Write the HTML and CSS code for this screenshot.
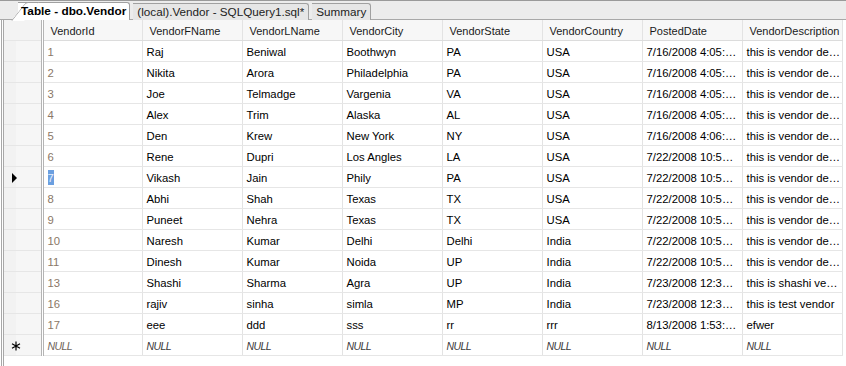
FILE: index.html
```html
<!DOCTYPE html>
<html>
<head>
<meta charset="utf-8">
<link rel="stylesheet" href="styles.css">
</head>
<body>
<div class="tabs">
  <div class="tab active">Table - dbo.Vendor</div>
  <div class="tab">(local).Vendor - SQLQuery1.sql*</div>
  <div class="tab">Summary</div>
</div>
<div class="panel">
  <table class="grid">
    <colgroup>
      <col class="c-rh"><col class="c"><col class="c"><col class="c"><col class="c"><col class="c"><col class="c"><col class="c"><col class="c">
    </colgroup>
    <thead>
      <tr><th class="rh"></th><th>VendorId</th><th>VendorFName</th><th>VendorLName</th><th>VendorCity</th><th>VendorState</th><th>VendorCountry</th><th>PostedDate</th><th>VendorDescription</th></tr>
    </thead>
    <tbody>
      <tr><td class="rh"></td><td class="id">1</td><td>Raj</td><td>Beniwal</td><td>Boothwyn</td><td>PA</td><td>USA</td><td>7/16/2008 4:05:…</td><td>this is vendor de…</td></tr>
      <tr><td class="rh"></td><td class="id">2</td><td>Nikita</td><td>Arora</td><td>Philadelphia</td><td>PA</td><td>USA</td><td>7/16/2008 4:05:…</td><td>this is vendor de…</td></tr>
      <tr><td class="rh"></td><td class="id">3</td><td>Joe</td><td>Telmadge</td><td>Vargenia</td><td>VA</td><td>USA</td><td>7/16/2008 4:05:…</td><td>this is vendor de…</td></tr>
      <tr><td class="rh"></td><td class="id">4</td><td>Alex</td><td>Trim</td><td>Alaska</td><td>AL</td><td>USA</td><td>7/16/2008 4:05:…</td><td>this is vendor de…</td></tr>
      <tr><td class="rh"></td><td class="id">5</td><td>Den</td><td>Krew</td><td>New York</td><td>NY</td><td>USA</td><td>7/16/2008 4:06:…</td><td>this is vendor de…</td></tr>
      <tr><td class="rh"></td><td class="id">6</td><td>Rene</td><td>Dupri</td><td>Los Angles</td><td>LA</td><td>USA</td><td>7/22/2008 10:5…</td><td>this is vendor de…</td></tr>
      <tr><td class="rh"><span class="arrow"></span></td><td class="id"><span class="sel">7</span></td><td>Vikash</td><td>Jain</td><td>Phily</td><td>PA</td><td>USA</td><td>7/22/2008 10:5…</td><td>this is vendor de…</td></tr>
      <tr><td class="rh"></td><td class="id">8</td><td>Abhi</td><td>Shah</td><td>Texas</td><td>TX</td><td>USA</td><td>7/22/2008 10:5…</td><td>this is vendor de…</td></tr>
      <tr><td class="rh"></td><td class="id">9</td><td>Puneet</td><td>Nehra</td><td>Texas</td><td>TX</td><td>USA</td><td>7/22/2008 10:5…</td><td>this is vendor de…</td></tr>
      <tr><td class="rh"></td><td class="id">10</td><td>Naresh</td><td>Kumar</td><td>Delhi</td><td>Delhi</td><td>India</td><td>7/22/2008 10:5…</td><td>this is vendor de…</td></tr>
      <tr><td class="rh"></td><td class="id">11</td><td>Dinesh</td><td>Kumar</td><td>Noida</td><td>UP</td><td>India</td><td>7/22/2008 10:5…</td><td>this is vendor de…</td></tr>
      <tr><td class="rh"></td><td class="id">13</td><td>Shashi</td><td>Sharma</td><td>Agra</td><td>UP</td><td>India</td><td>7/23/2008 12:3…</td><td>this is shashi ve…</td></tr>
      <tr><td class="rh"></td><td class="id">16</td><td>rajiv</td><td>sinha</td><td>simla</td><td>MP</td><td>India</td><td>7/23/2008 12:3…</td><td>this is test vendor</td></tr>
      <tr><td class="rh"></td><td class="id">17</td><td>eee</td><td>ddd</td><td>sss</td><td>rr</td><td>rrr</td><td>8/13/2008 1:53:…</td><td>efwer</td></tr>
      <tr class="new"><td class="rh"><svg class="star" width="10" height="10" viewBox="0 0 10 10"><path d="M5 0.5V9.5M1 2.75L9 7.25M1 7.25L9 2.75" stroke="#000" stroke-width="1.2" fill="none"/></svg></td><td class="id">NULL</td><td>NULL</td><td>NULL</td><td>NULL</td><td>NULL</td><td>NULL</td><td>NULL</td><td>NULL</td></tr>
    </tbody>
  </table>
</div>
</body>
</html>
```

FILE: styles.css
```css
html, body {
  margin: 0;
  padding: 0;
  background: #ffffff;
  width: 846px;
  height: 366px;
  overflow: hidden;
}

body {
  font-family: "Liberation Sans", "DejaVu Sans", sans-serif;
  font-size: 11px;
  color: #000;
}

.tabs {
  height: 18px;
  border-top: 1px solid #9a9a9a;
  border-bottom: 1px solid #a8a8a8;
  background: #ececec;
  display: flex;
  align-items: flex-end;
  padding-left: 18px;
  gap: 3px;
}

.tab {
  position: relative;
  height: 16px;
  line-height: 16px;
  padding: 0 4px 0 4px;
  background: #e6e6e6;
  border: 1px solid #a0a0a0;
  border-bottom: none;
  border-left: none;
  border-top-right-radius: 3px;
  font-family: "Liberation Sans", sans-serif;
  font-size: 11.7px;
  color: #222;
  margin-bottom: -1px;
}

.tab::before {
  content: "";
  position: absolute;
  left: -7px;
  top: -1px;
  width: 12px;
  height: 17px;
  background: inherit;
  border-left: 1px solid #a0a0a0;
  border-top: 1px solid #a0a0a0;
  border-top-left-radius: 3px;
  transform: skewX(-38deg);
  transform-origin: bottom left;
  z-index: -1;
}

.tab.active {
  background: #ffffff;
  font-weight: bold;
  font-size: 11.8px;
  color: #000;
  z-index: 2;
  padding: 0 3px 0 3px;
  height: 17px;
}

.tab.active::before {
  height: 18px;
}

.panel {
  border-left: 3px double #a8a8a8;
  margin-left: 1px;
  height: 346px;
}

.grid {
  border-collapse: collapse;
  table-layout: fixed;
  width: 838px;
}

.c-rh { width: 38px; }
.c { width: 100px; }

.grid th,
.grid td {
  height: 18px;
  padding: 2px 4px 0 4px;
  white-space: nowrap;
  overflow: hidden;
  text-align: left;
  font-family: "Liberation Sans", sans-serif;
  font-size: 11.3px;
  border-right: 1px solid #e3e3e3;
  border-bottom: 1px solid #e6e6e6;
}

.grid th {
  font-weight: normal;
  font-size: 11px;
  color: #1a1a1a;
  background: #f7f7f7;
  padding: 1px 4px 0 7px;
  height: 19px;
  border-bottom: 1px solid #dcdcdc;
}

.grid .rh {
  background: linear-gradient(to right, #f2f2f2 0, #f2f2f2 12px, #f6f6f6 12px, #f6f6f6 100%);
  border-right: 3px double #b4b4b4;
  border-bottom: 1px solid #e6e6e6;
  padding: 0;
  position: relative;
}

.grid th.rh {
  background: #f3f3f3;
}

.grid td.id {
  color: #8a7766;
}

.sel {
  background: #6b9fe0;
  color: #e8f0ff;
  padding: 2px 0 1px 0;
}

.arrow {
  display: block;
  width: 0;
  height: 0;
  margin: 2px 0 0 8px;
  border-top: 5px solid transparent;
  border-bottom: 5px solid transparent;
  border-left: 5px solid #000;
}

.star {
  display: block;
  margin: 2px 0 0 7px;
}

.grid tr.new td {
  font-style: italic;
  color: #3a3a3a;
  font-size: 10.5px;
  letter-spacing: -0.6px;
}

.grid tr.new td.id {
  color: #6e6458;
}

.grid tr.new td.rh {
  font-style: normal;
  letter-spacing: 0;
}
```
